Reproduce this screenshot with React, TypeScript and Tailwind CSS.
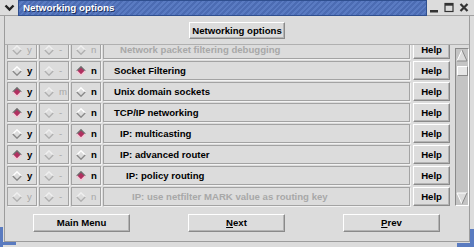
import React from "react";

type Row = {
	label: string;
	indent: string;
	val?: "y" | "n";
	mid: string;
	disabled?: boolean;
};

const rows: Row[] = [
	{ label: "Network packet filtering debugging", indent: "pl-[16px]", mid: "-", disabled: true },
	{ label: "Socket Filtering", indent: "pl-[10px]", val: "n", mid: "-" },
	{ label: "Unix domain sockets", indent: "pl-[10px]", val: "y", mid: "m" },
	{ label: "TCP/IP networking", indent: "pl-[10px]", val: "y", mid: "-" },
	{ label: "IP: multicasting", indent: "pl-[16px]", val: "n", mid: "-" },
	{ label: "IP: advanced router", indent: "pl-[16px]", val: "y", mid: "-" },
	{ label: "IP: policy routing", indent: "pl-[22px]", val: "n", mid: "-" },
	{ label: "IP: use netfilter MARK value as routing key", indent: "pl-[28px]", mid: "-", disabled: true },
];

// Motif style diamond indicator
function Diamond({ on, dim }: { on?: boolean; dim?: boolean }) {
	const light = dim ? "#efefef" : "#ffffff";
	const dark = dim ? "#b0b0b0" : "#8a8a8a";
	return (
		<svg width="10" height="10" viewBox="0 0 10 10" className="shrink-0">
			<polygon points="5,0.8 9.2,5 5,9.2 0.8,5" fill={on ? "#b03060" : "#dcdcdc"} />
			<polyline points="0.8,5 5,0.8 9.2,5" fill="none" stroke={on ? "#6e6e6e" : light} strokeWidth="1.4" />
			<polyline points="0.8,5 5,9.2 9.2,5" fill="none" stroke={on ? "#f4c8d6" : dark} strokeWidth="1.4" />
		</svg>
	);
}

function RadioCell({ on, letter, dim }: { on?: boolean; letter: string; dim?: boolean }) {
	return (
		<div className="w-[30px] h-[19px] shrink-0 flex items-center pl-[4px] gap-[5px] border border-[#a3a3a3] shadow-[1px_1px_0_#f2f2f2]">
			<Diamond on={on} dim={dim} />
			<span className={dim ? "text-[#a8a8a8] font-normal" : "text-black"}>{letter}</span>
		</div>
	);
}

function RaisedButton({ className, children }: { className: string; children: React.ReactNode }) {
	return (
		<div
			className={`${className} flex items-center justify-center bg-[#dcdcdc] border border-t-white border-l-white border-r-[#8a8a8a] border-b-[#8a8a8a] shadow-[inset_-1px_-1px_0_#b4b4b4] text-black`}
		>
			{children}
		</div>
	);
}

export default function App() {
	return (
		<div className="w-[474px] h-[247px] relative overflow-hidden bg-[#dcdcdc] flex flex-col font-['Liberation_Sans',Arial,sans-serif] text-[9.6px] font-bold leading-none select-none">
			{/* Title bar */}
			<div className="h-[16px] flex shrink-0">
				<div className="w-[18px] flex items-center justify-center border-b border-[#a0a0a0]">
					<svg width="11" height="8" viewBox="0 0 11 8">
						<polyline points="1.5,1.5 5.5,5.5 9.5,1.5" fill="none" stroke="#222" strokeWidth="2.4" />
					</svg>
				</div>
				<div className="flex-1 flex items-center pl-[4px] border border-[#2f4f8f] bg-[repeating-linear-gradient(135deg,#4c6cb3_0px,#4c6cb3_2px,#5a7bc2_2px,#5a7bc2_4px)] text-white text-[9.8px] [text-shadow:1px_1px_0_#1d2f5c]">
					Networking options
				</div>
				<div className="w-[47px] flex items-center justify-end gap-[5px] pr-[5px] border-b border-[#a0a0a0]">
					<svg width="10" height="11" viewBox="0 0 10 11">
						<rect x="1" y="8" width="8" height="2.5" fill="#333" />
					</svg>
					<svg width="10" height="11" viewBox="0 0 10 11">
						<rect x="1" y="1.5" width="8" height="8" fill="none" stroke="#333" strokeWidth="1.2" />
						<rect x="1" y="1.5" width="8" height="2.2" fill="#333" />
					</svg>
					<svg width="10" height="11" viewBox="0 0 10 11">
						<path d="M1.5 2 L8.5 9 M8.5 2 L1.5 9" stroke="#333" strokeWidth="2.2" />
					</svg>
				</div>
			</div>

			{/* Body */}
			<div className="flex-1 flex flex-col ml-[4px] mr-[4px] border-l border-r border-b border-[#9c9c9c]">
				<div className="h-[28px] shrink-0 flex justify-center pt-[6px]">
					<RaisedButton className="w-[96px] h-[17px]">Networking options</RaisedButton>
				</div>

				<div className="h-[163px] shrink-0 flex border-t border-[#b0b0b0] pl-[2px]">
					<div className="w-[444px] overflow-hidden">
						<div className="-mt-[5px] flex flex-col gap-[2px]">
							{rows.map((r, i) => (
								<div key={i} className="flex h-[19px]">
									<div className="flex gap-[2px]">
										<RadioCell letter="y" on={r.val === "y"} dim={r.disabled} />
										<RadioCell letter={r.mid} dim />
										<RadioCell letter="n" on={r.val === "n"} dim={r.disabled} />
									</div>
									<div
										className={`ml-[2px] w-[308px] h-[19px] flex items-center border border-[#a3a3a3] shadow-[1px_1px_0_#f2f2f2] ${r.indent} ${r.disabled ? "text-[#a8a8a8]" : "text-black"}`}
									>
										{r.label}
									</div>
									<RaisedButton className="ml-[3px] w-[37px] h-[19px]">Help</RaisedButton>
								</div>
							))}
						</div>
					</div>
					<div className="ml-[5px] mt-[3px] mb-[1px] w-[14px] flex flex-col bg-[#c4c4c4] border border-t-[#8a8a8a] border-l-[#8a8a8a] border-r-white border-b-white">
						<svg width="12" height="13" viewBox="0 0 12 13" className="shrink-0">
							<polygon points="6,1 11,12 1,12" fill="#dcdcdc" />
							<polyline points="1,12 6,1" fill="none" stroke="#ffffff" strokeWidth="1" />
							<polyline points="6,1 11,12 1,12" fill="none" stroke="#8a8a8a" strokeWidth="1" />
						</svg>
						<div className="mt-[4px] h-[10px] mx-[0.5px] bg-[#e6e6e6] border border-t-white border-l-white border-r-[#8a8a8a] border-b-[#8a8a8a]" />
						<div className="flex-1" />
						<svg width="12" height="13" viewBox="0 0 12 13" className="shrink-0">
							<polygon points="1,1 11,1 6,12" fill="#dcdcdc" />
							<polyline points="6,12 1,1 11,1" fill="none" stroke="#ffffff" strokeWidth="1" />
							<polyline points="11,1 6,12" fill="none" stroke="#8a8a8a" strokeWidth="1" />
						</svg>
					</div>
				</div>

				<div className="flex-1 flex items-start pt-[7px] pl-[28px] gap-[58px]">
					<RaisedButton className="w-[97px] h-[18px]">Main Menu</RaisedButton>
					<RaisedButton className="w-[97px] h-[18px]">
						<span className="underline underline-offset-1">N</span>ext
					</RaisedButton>
					<RaisedButton className="w-[97px] h-[18px]">
						<span className="underline underline-offset-1">P</span>rev
					</RaisedButton>
				</div>
			</div>
			<div className="h-[5px] shrink-0" />

			{/* frame resize corners */}
			<div className="absolute left-0 bottom-0 w-[3px] h-[20px] bg-[#5a7bc0]" />
			<div className="absolute left-0 bottom-[2px] w-[16px] h-[3px] bg-[#5a7bc0]" />
			<div className="absolute right-0 bottom-0 w-[4px] h-[18px] bg-[#5a7bc0]" />
			<div className="absolute right-0 bottom-0 w-[17px] h-[4px] bg-[#5a7bc0]" />
		</div>
	);
}
